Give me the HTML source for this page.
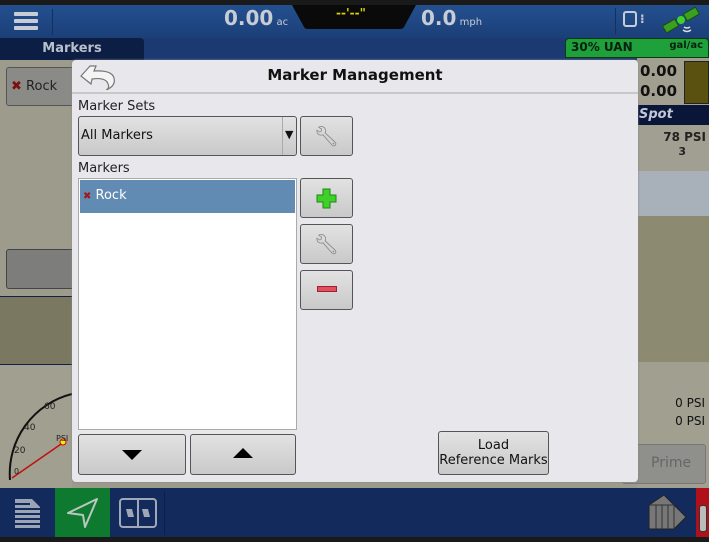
<!DOCTYPE html>
<html><head><meta charset="utf-8"><style>
*{box-sizing:border-box;margin:0;padding:0}
body{width:709px;height:542px;overflow:hidden;position:relative;background:#9c9a8a;font-family:"DejaVu Sans","Liberation Sans",sans-serif}
.a{position:absolute}
.btn{position:absolute;background:linear-gradient(#e2e2e2,#c9c9c9);border:1px solid #555;border-radius:3px}
</style></head><body>
<div class="a" style="left:0;top:0;width:709px;height:5px;background:#1a1a1a"></div>
<div class="a" style="left:0;top:5px;width:709px;height:33px;background:linear-gradient(#24508f,#1b3f78)"></div>
<div class="a" style="left:0;top:38px;width:709px;height:22px;background:#1b3a72"></div>
<div class="a" style="left:14px;top:12px;width:24px;height:4px;background:#c8ccd4;border-radius:1px"></div>
<div class="a" style="left:14px;top:19px;width:24px;height:4px;background:#c8ccd4;border-radius:1px"></div>
<div class="a" style="left:14px;top:26px;width:24px;height:4px;background:#c8ccd4;border-radius:1px"></div>
<div class="a" style="left:52px;top:9px;width:1px;height:26px;background:#13305e"></div>
<div class="a" style="left:224px;top:6px;color:#c8ccd4;font-weight:bold;font-size:20px">0.00<span style="font-size:10px;font-weight:normal"> ac</span></div>
<svg class="a" style="left:292px;top:5px" width="124" height="24"><path d="M0 0H124L112 22Q111 24 108 24H16Q13 24 12 22Z" fill="#0a0a0a"/></svg>
<div class="a" style="left:336px;top:6px;color:#d9d000;font-size:12px;font-weight:bold">--'--"</div>
<div class="a" style="left:421px;top:6px;color:#c8ccd4;font-weight:bold;font-size:20px">0.0<span style="font-size:10px;font-weight:normal"> mph</span></div>
<div class="a" style="left:615px;top:8px;width:1px;height:26px;background:#13305e"></div>
<div class="a" style="left:623px;top:11px;width:14px;height:16px;border:2px solid #c8ccd4;border-radius:3px"></div>
<div class="a" style="left:640px;top:12px;color:#c8ccd4;font-size:12px;font-weight:bold">⁝</div>
<svg class="a" style="left:660px;top:5px" width="42" height="30"><g transform="rotate(-30 21 15)"><rect x="2" y="11" width="14" height="8" fill="#3aa020" stroke="#1a4a10"/><rect x="26" y="11" width="14" height="8" fill="#3aa020" stroke="#1a4a10"/><circle cx="21" cy="15" r="4" fill="#3fd02a"/></g><path d="M24 22q3 2 6 0M23 25q4 3 8 0" stroke="#ddd" fill="none" stroke-width="1.5"/></svg>
<div class="a" style="left:0;top:38px;width:144px;height:22px;background:#0c1e44;border-radius:0 4px 0 0;color:#b8c0cc;font-weight:bold;font-size:13px;text-align:center;line-height:22px">Markers</div>
<div class="a" style="left:565px;top:38px;width:144px;height:20px;background:#1ea03a;border:1px solid #0a3a12;border-radius:4px 4px 0 0;font-size:12px;font-weight:bold;color:#082010;padding:1px 5px">30% UAN<span style="float:right;font-size:10px">gal/ac</span></div>
<div class="a" style="left:0;top:60px;width:72px;height:305px;background:#9d9c8c"></div>
<div class="a" style="left:6px;top:67px;width:70px;height:39px;background:#8a8a86;border:1px solid #555;border-radius:3px;font-size:13px;color:#222;padding:11px 4px"><span style="color:#7a1010">✖</span> Rock</div>
<div class="a" style="left:6px;top:249px;width:70px;height:40px;background:#7d7d7b;border:1px solid #444;border-radius:3px"></div>
<div class="a" style="left:0;top:296px;width:72px;height:69px;background:#7b7862;border-top:1px solid #10204a;border-bottom:1px solid #10204a"></div>
<div class="a" style="left:0;top:365px;width:72px;height:123px;background:#a09f90"></div>
<svg class="a" style="left:0;top:390px" width="72" height="98"><path d="M10 90A82 82 0 0 1 72 4" stroke="#111" stroke-width="2" fill="none"/><line x1="12" y1="88" x2="64" y2="52" stroke="#c01010" stroke-width="1.5"/><circle cx="63" cy="52" r="3" fill="#ee0" stroke="#c01010"/><text x="44" y="19" font-size="9" fill="#222">60</text><text x="24" y="40" font-size="9" fill="#222">40</text><text x="14" y="63" font-size="9" fill="#222">20</text><text x="56" y="51" font-size="8" fill="#222">PSI</text><text x="14" y="84" font-size="8" fill="#222">0</text></svg>
<div class="a" style="left:637px;top:58px;width:72px;height:47px;background:#a09f90"></div>
<div class="a" style="left:640px;top:62px;font-size:15px;font-weight:bold;color:#111">0.00</div>
<div class="a" style="left:640px;top:82px;font-size:15px;font-weight:bold;color:#111">0.00</div>
<div class="a" style="left:684px;top:61px;width:25px;height:43px;background:#5a5010;border:1px solid #222"></div>
<div class="a" style="left:637px;top:105px;width:72px;height:20px;background:#0a1638;color:#c0c8d8;font-style:italic;font-weight:bold;font-size:13px;padding:2px 2px">Spot</div>
<div class="a" style="left:637px;top:125px;width:72px;height:46px;background:#a09f92;font-size:12px;font-weight:bold;color:#222;text-align:right;padding:5px 3px">78 PSI<br><span style="font-size:11px;margin-right:20px">3</span></div>
<div class="a" style="left:637px;top:171px;width:72px;height:45px;background:#a8b0ba"></div>
<div class="a" style="left:637px;top:216px;width:72px;height:146px;background:#8d8a72"></div>
<div class="a" style="left:637px;top:362px;width:72px;height:126px;background:#a09f90;font-size:12px;color:#111;text-align:right;padding:34px 4px">0 PSI<br><span style="line-height:22px">0 PSI</span></div>
<div class="a" style="left:622px;top:444px;width:84px;height:40px;background:#8f8f8b;border:1px solid #777;border-radius:3px;color:#666;font-size:14px;padding:10px 0 0 28px">Prime</div>
<div class="a" style="left:0;top:488px;width:709px;height:49px;background:#132a5c"></div>
<div class="a" style="left:0;top:537px;width:709px;height:5px;background:#1a1a1a"></div>
<svg class="a" style="left:12px;top:497px" width="32" height="34"><path d="M3 2H20L28 10V31H3Z" fill="#9aa4b4"/><g stroke="#132a5c" stroke-width="2"><line x1="3" y1="12" x2="28" y2="12"/><line x1="3" y1="17" x2="28" y2="17"/><line x1="3" y1="22" x2="28" y2="22"/><line x1="3" y1="27" x2="28" y2="27"/><line x1="3" y1="7" x2="18" y2="7"/></g></svg>
<div class="a" style="left:55px;top:488px;width:55px;height:49px;background:#0e7a30"></div>
<svg class="a" style="left:66px;top:496px" width="34" height="34"><path d="M2 17L31 3L19 31L17 19Z" fill="none" stroke="#b8c8c0" stroke-width="2" stroke-linejoin="round"/></svg>
<svg class="a" style="left:118px;top:497px" width="40" height="32"><rect x="2" y="2" width="36" height="28" rx="3" fill="none" stroke="#a0a8b8" stroke-width="2"/><line x1="20" y1="2" x2="20" y2="30" stroke="#a0a8b8" stroke-width="2"/><path d="M8 12l6 0 2 8-6 0z M24 12l6 0 2 8-6 0z" fill="#a0a8b8"/></svg>
<div class="a" style="left:164px;top:491px;width:1px;height:44px;background:#0d1f46"></div>
<svg class="a" style="left:646px;top:493px" width="42" height="42"><path d="M3 12L18 2L40 24L28 36H3Z" fill="#777" stroke="#222"/><g stroke="#333"><line x1="10" y1="12" x2="10" y2="36"/><line x1="16" y1="12" x2="16" y2="36"/><line x1="22" y1="12" x2="22" y2="36"/><line x1="3" y1="12" x2="28" y2="12"/><line x1="28" y1="12" x2="28" y2="36"/></g></svg>
<div class="a" style="left:696px;top:488px;width:13px;height:49px;background:#b0101a"></div>
<div class="a" style="left:699px;top:505px;width:8px;height:27px;background:#bbb;border:1px solid #333;border-radius:3px"></div>
<div class="a" style="left:72px;top:60px;width:566px;height:422px;background:#e8e8ec;border-radius:4px;box-shadow:0 0 2px #888"></div>
<div class="a" style="left:72px;top:92px;width:566px;height:2px;background:#c8c8cc"></div>
<svg class="a" style="left:78px;top:62px" width="42" height="28"><path d="M12 4L3 14L13 22L14 17Q28 15 30 22Q32 26 28 28Q38 24 36 16Q34 8 16 9L18 4Z" fill="#f4f4f4" stroke="#777" stroke-width="1.2"/></svg>
<div class="a" style="left:72px;top:66px;width:566px;text-align:center;font-weight:bold;font-size:15px;color:#111">Marker Management</div>
<div class="a" style="left:78px;top:99px;font-size:13px;color:#222">Marker Sets</div>
<div class="btn" style="left:78px;top:116px;width:219px;height:40px;font-size:13px;color:#111;padding:11px 2px"><span>All Markers</span><span style="position:absolute;left:203px;top:0;height:38px;border-left:1px solid #aaa;width:15px;padding:11px 0 0 2px;font-size:11px">▼</span></div>
<div class="btn" style="left:300px;top:116px;width:53px;height:40px;font-size:20px;color:#888;text-align:center;line-height:38px">🔧︎</div>
<div class="a" style="left:78px;top:161px;font-size:13px;color:#222">Markers</div>
<div class="a" style="left:78px;top:178px;width:219px;height:252px;background:#fff;border:1px solid #aaa"></div>
<div class="a" style="left:80px;top:180px;width:215px;height:33px;background:#628bb4;color:#fff;font-size:13px;padding:8px 3px"><span style="color:#a01818;font-size:10px">✖</span> Rock</div>
<div class="btn" style="left:300px;top:178px;width:53px;height:40px"><svg width="51" height="38"><path d="M22 10h7v6h6v7h-6v6h-7v-6h-6v-7h6z" fill="#3fd02a" stroke="#1a8a10"/></svg></div>
<div class="btn" style="left:300px;top:224px;width:53px;height:40px;font-size:20px;color:#888;text-align:center;line-height:38px">🔧︎</div>
<div class="btn" style="left:300px;top:270px;width:53px;height:40px"><div style="margin:15px 0 0 16px;width:20px;height:6px;background:#e05060;border:1px solid #a02030"></div></div>
<div class="btn" style="left:78px;top:434px;width:108px;height:41px"><div style="margin:15px auto 0;width:0;height:0;border-left:10px solid transparent;border-right:10px solid transparent;border-top:10px solid #000"></div></div>
<div class="btn" style="left:190px;top:434px;width:106px;height:41px"><div style="margin:13px auto 0;width:0;height:0;border-left:10px solid transparent;border-right:10px solid transparent;border-bottom:10px solid #000"></div></div>
<div class="btn" style="left:438px;top:431px;width:111px;height:44px;font-size:13px;color:#111;text-align:center;padding-top:6px;line-height:15px">Load<br>Reference Marks</div>
</body></html>
